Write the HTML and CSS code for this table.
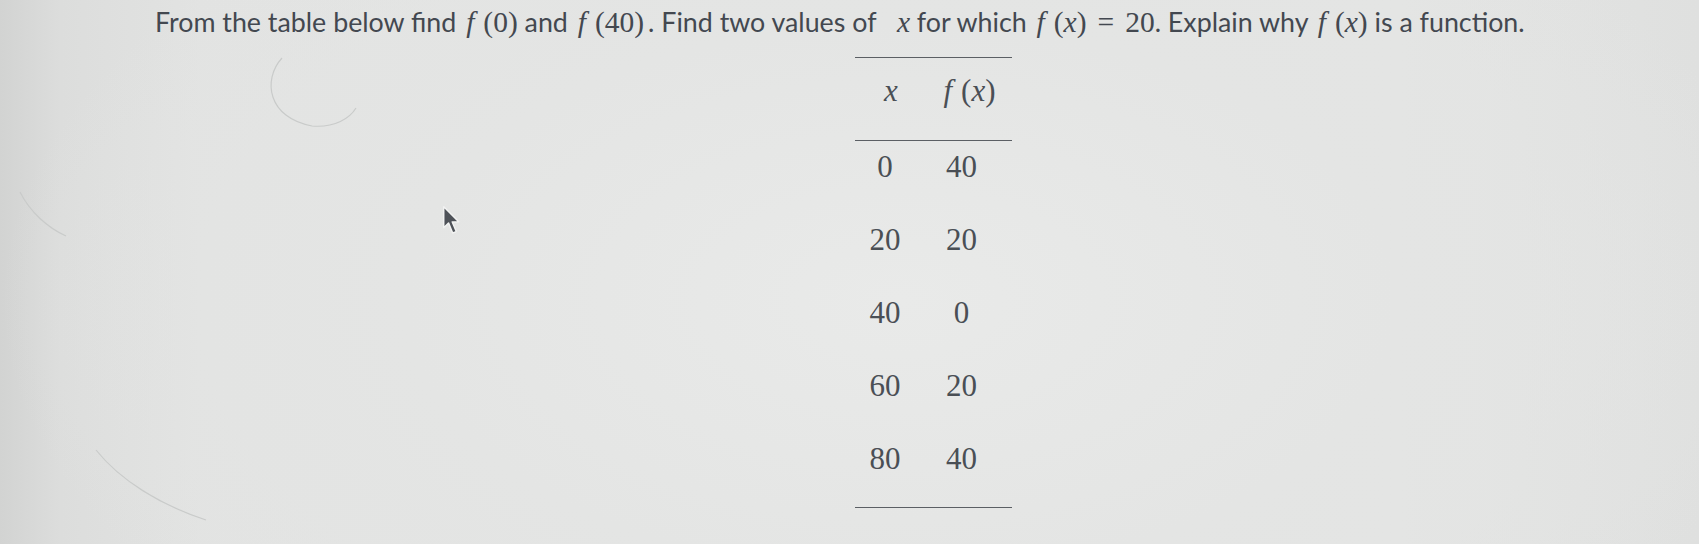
FILE: index.html
```html
<!DOCTYPE html>
<html lang="en">
<head>
<meta charset="utf-8">
<title>Function table question</title>
<link rel="stylesheet" href="styles.css">
</head>
<body>
<main class="page">
  <p class="question">From the table below find <span class="m"><i class="fn">f</i>(0)</span> and <span class="m"><i class="fn">f</i>(40)</span><span class="dot">.</span> Find two values of <span class="m mx"><i>x</i></span> for which <span class="m"><i class="fn">f</i>(<i>x</i>)<span class="eq">=</span>20</span>. Explain why <span class="m"><i class="fn">f</i>(<i>x</i>)</span> is a function.</p>
  <div class="table">
    <div class="row head">
      <span class="c1"><i>x</i></span>
      <span class="c2"><i class="fn">f</i>(<i>x</i>)</span>
    </div>
    <div class="body">
      <div class="row"><span class="c1">0</span><span class="c2">40</span></div>
      <div class="row"><span class="c1">20</span><span class="c2">20</span></div>
      <div class="row"><span class="c1">40</span><span class="c2">0</span></div>
      <div class="row"><span class="c1">60</span><span class="c2">20</span></div>
      <div class="row"><span class="c1">80</span><span class="c2">40</span></div>
    </div>
  </div>
  <svg class="scratches" width="1699" height="544" viewBox="0 0 1699 544" aria-hidden="true">
    <path d="M282 58 C262 80 268 118 312 126 C335 128 350 118 356 108" />
    <path d="M20 192 C30 212 48 228 66 236" />
    <path d="M96 450 C120 480 160 505 206 520" />
  </svg>
  <svg class="cursor" width="21" height="31" viewBox="0 0 16 26" aria-hidden="true">
    <path d="M1.5 1.5 L1.5 19 L5.5 15 L9 23.5 L12 22.3 L8.6 14.2 L14 14 Z" />
  </svg>
</main>
</body>
</html>
```
FILE: styles.css
```css
html, body {
  margin: 0;
  padding: 0;
}
body {
  width: 1699px;
  height: 544px;
  overflow: hidden;
  background:
    radial-gradient(ellipse 900px 500px at 900px 300px, #e9eae9 0%, #e4e5e4 55%, rgba(228,229,228,0) 100%),
    linear-gradient(90deg, #d2d3d2 0px, #dcdddc 60px, #e2e3e2 200px, #e4e5e4 1400px, #dfe0df 1699px);
  color: #434850;
}
.page {
  position: relative;
  height: 544px;
  padding: 5px 0 0 155px;
  box-sizing: border-box;
}
.question {
  margin: 0;
  font-family: Lato, "Noto Sans", sans-serif;
  font-size: 26.8px;
  line-height: 34px;
  white-space: nowrap;
}
.m {
  font-family: "Liberation Serif", "Times New Roman", serif;
  font-size: 29.5px;
  margin-left: 3px;
}
.m i {
  font-style: italic;
}
.fn {
  margin-right: 9px;
}
.mx {
  margin-left: 14px;
}
.eq {
  margin: 0 11px 0 11px;
}
.dot {
  margin-left: 4px;
}
.table {
  margin: 18px 0 0 700px;
  width: 157px;
  border-top: 1.5px solid #5b5f64;
  border-bottom: 1.5px solid #5b5f64;
  font-family: "Liberation Serif", "Times New Roman", serif;
  font-size: 31px;
  color: #4a4f55;
}
.row {
  display: grid;
  grid-template-columns: 60px 97px;
  height: 73px;
  line-height: 40px;
}
.row span {
  text-align: center;
}
.head {
  height: 83px;
  box-sizing: border-box;
  padding-top: 13px;
  border-bottom: 1.5px solid #5b5f64;
}
.head .c1 {
  padding-left: 12px;
}
.head .c2 {
  padding-left: 12px;
}
.head .fn {
  margin-right: 9px;
}
.body {
  padding: 6px 0 0;
}
.body .row .c2 {
  padding-right: 4px;
}
.body .row:last-child {
  height: 68px;
}
.scratches {
  position: absolute;
  left: 0;
  top: 0;
  pointer-events: none;
}
.scratches path {
  fill: none;
  stroke: #c9cbca;
  stroke-width: 1.2;
}
.cursor {
  position: absolute;
  left: 441px;
  top: 205px;
}
.cursor path {
  fill: #4e5258;
  stroke: #f2f3f2;
  stroke-width: 1.2;
  stroke-linejoin: round;
}
```
